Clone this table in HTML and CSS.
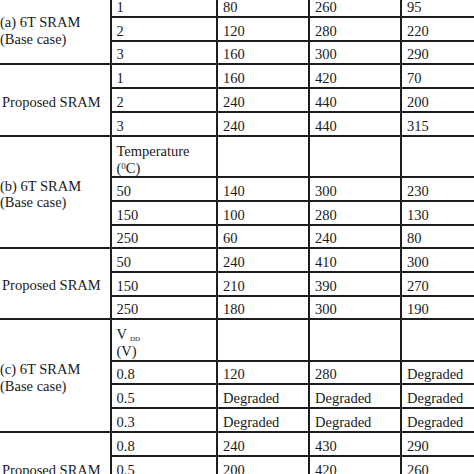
FILE: index.html
```html
<!DOCTYPE html>
<html>
<head>
<meta charset="utf-8">
<link rel="stylesheet" href="styles.css">
</head>
<body>
<div class="sheet">
  <div class="grp g3">(a) 6T SRAM<br>(Base case)</div>
  <div class="c">1</div><div class="c">80</div><div class="c">260</div><div class="c">95</div>
  <div class="c">2</div><div class="c">120</div><div class="c">280</div><div class="c">220</div>
  <div class="c">3</div><div class="c">160</div><div class="c">300</div><div class="c">290</div>

  <div class="grp g3 prop">Proposed SRAM</div>
  <div class="c">1</div><div class="c">160</div><div class="c">420</div><div class="c">70</div>
  <div class="c">2</div><div class="c">240</div><div class="c">440</div><div class="c">200</div>
  <div class="c">3</div><div class="c">240</div><div class="c">440</div><div class="c">315</div>

  <div class="grp g4">(b) 6T SRAM<br>(Base case)</div>
  <div class="c two">Temperature<br>(<sup>0</sup>C)</div><div class="c"></div><div class="c"></div><div class="c"></div>
  <div class="c">50</div><div class="c">140</div><div class="c">300</div><div class="c">230</div>
  <div class="c">150</div><div class="c">100</div><div class="c">280</div><div class="c">130</div>
  <div class="c">250</div><div class="c">60</div><div class="c">240</div><div class="c">80</div>

  <div class="grp g3 prop">Proposed SRAM</div>
  <div class="c">50</div><div class="c">240</div><div class="c">410</div><div class="c">300</div>
  <div class="c">150</div><div class="c">210</div><div class="c">390</div><div class="c">270</div>
  <div class="c">250</div><div class="c">180</div><div class="c">300</div><div class="c">190</div>

  <div class="grp g4">(c) 6T SRAM<br>(Base case)</div>
  <div class="c two">V<sub>DD</sub><br>(V)</div><div class="c"></div><div class="c"></div><div class="c"></div>
  <div class="c">0.8</div><div class="c">120</div><div class="c">280</div><div class="c">Degraded</div>
  <div class="c">0.5</div><div class="c">Degraded</div><div class="c">Degraded</div><div class="c">Degraded</div>
  <div class="c">0.3</div><div class="c">Degraded</div><div class="c">Degraded</div><div class="c">Degraded</div>

  <div class="grp g3 prop">Proposed SRAM</div>
  <div class="c">0.8</div><div class="c">240</div><div class="c">430</div><div class="c">290</div>
  <div class="c">0.5</div><div class="c">200</div><div class="c">420</div><div class="c">260</div>
  <div class="c">0.3</div><div class="c"></div><div class="c"></div><div class="c"></div>
</div>
</body>
</html>
```
FILE: styles.css
```css
html, body {
  margin: 0;
  padding: 0;
  background: #fff;
  overflow: hidden;
}
body {
  width: 474px;
  height: 474px;
}
.sheet {
  display: grid;
  grid-template-columns: 111.5px 104.5px 90px 90px 110px;
  grid-template-rows: 21.7px 22px 21px 22px 22px 22px 39px 22px 22px 21px 22px 22px 21px 40px 21px 22px 22px 22px 22px 22px;
  gap: 2px;
  padding: 2px;
  background: #1e1e1e;
  width: max-content;
  margin-top: -7.7px;
  margin-left: -4px;
  font-family: "Liberation Serif", "Times New Roman", serif;
  font-size: 14.5px;
  line-height: 16.5px;
  color: #1a1a1a;
}
.c, .grp {
  background: #fff;
  display: flex;
  flex-direction: column;
  justify-content: center;
  padding: 4px 0 0 5px;
  box-sizing: border-box;
  white-space: nowrap;
}
.grp {
  padding-left: 2px;
}
.grp.prop {
  padding-left: 4px;
}
.g3 { grid-row: span 3; }
.g4 { grid-row: span 4; }
.two {
  display: block;
  padding-top: 6px;
}
sup {
  font-size: 9px;
  line-height: 0;
  vertical-align: 4px;
}
sub {
  font-size: 7px;
  line-height: 0;
  vertical-align: -2px;
  margin-left: 3px;
}
```
